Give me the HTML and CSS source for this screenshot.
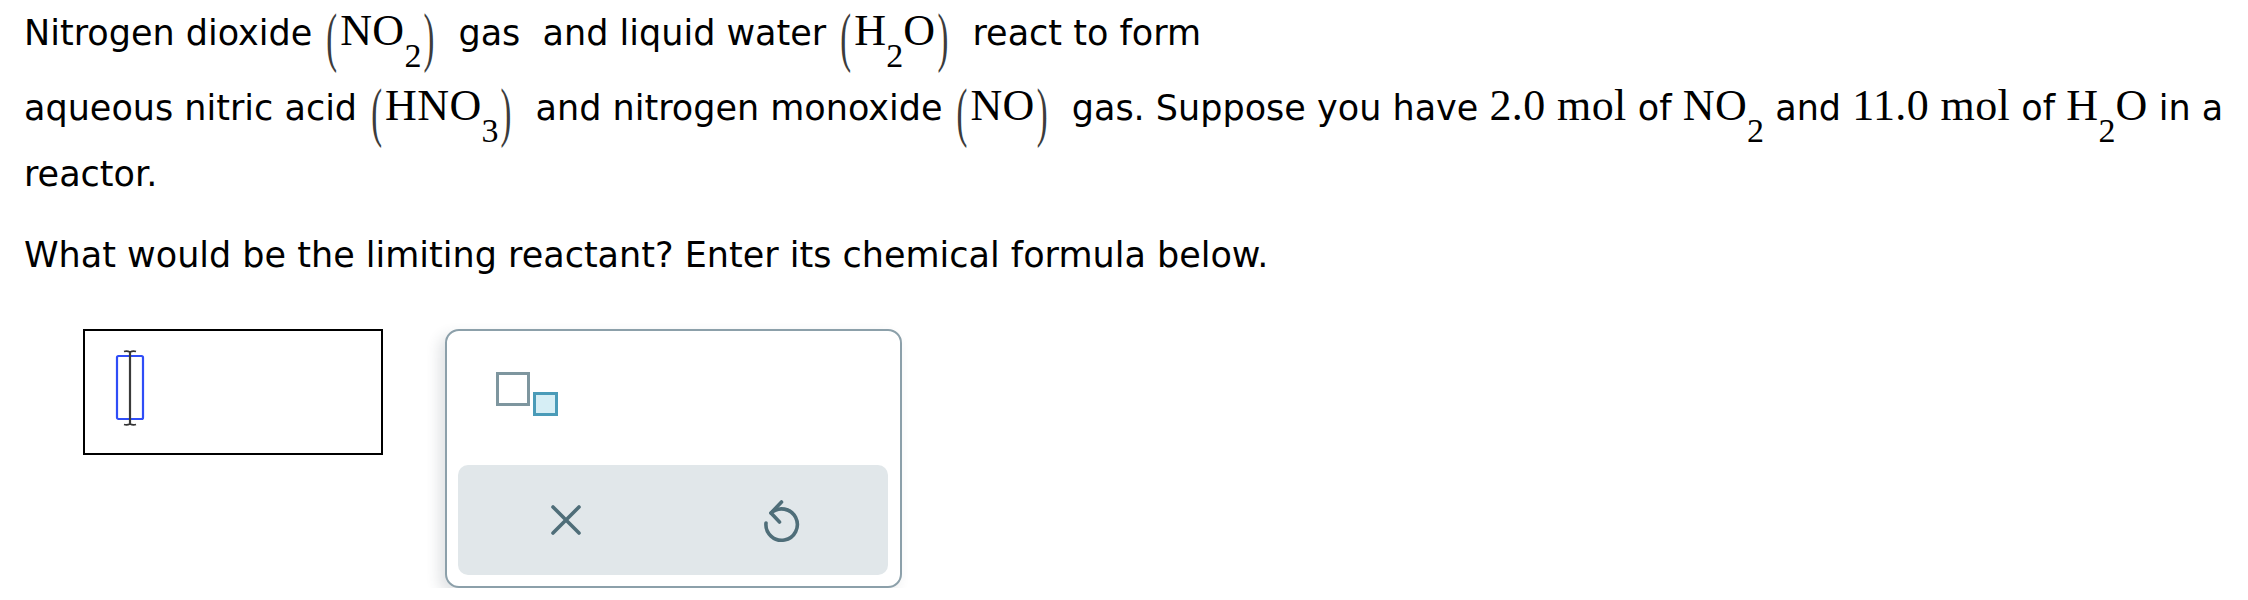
FILE: index.html
```html
<!DOCTYPE html>
<html lang="en">
<head>
<meta charset="utf-8">
<title>Limiting reactant</title>
<link rel="stylesheet" href="styles.css">
</head>
<body>
<div class="question">
  <p class="stmt">
    <span class="line l1">Nitrogen dioxide <span class="paren pl">(</span><span class="m">NO<sub>2</sub></span><span class="paren pr">)</span> gas&nbsp; and liquid water <span class="paren pl">(</span><span class="m">H<sub>2</sub>O</span><span class="paren pr">)</span> react to form</span>
    <span class="line l2">aqueous nitric acid <span class="paren pl">(</span><span class="m">HNO<sub>3</sub></span><span class="paren pr">)</span> and nitrogen monoxide <span class="paren pl">(</span><span class="m">NO</span><span class="paren pr">)</span> gas. Suppose you have <span class="m">2.0 mol</span> of <span class="m">NO<sub>2</sub></span> and <span class="m">11.0 mol</span> of <span class="m">H<sub>2</sub>O</span> in a</span>
    <span class="line l3">reactor.</span>
  </p>
  <p class="ask">What would be the limiting reactant? Enter its chemical formula below.</p>
  <div class="answer">
    <div class="input">
      <svg class="cursor" width="30" height="80" viewBox="0 0 30 80">
        <rect x="2" y="8" width="26" height="63" rx="1.5" fill="#fff" stroke="#2f4df7" stroke-width="2.2"/>
        <path d="M9 3.5 Q12 2.5 15 4 Q18 2.5 21 3.5" fill="none" stroke="#333" stroke-width="1.6"/>
        <path d="M9 76.5 Q12 77.5 15 76 Q18 77.5 21 76.5" fill="none" stroke="#333" stroke-width="1.6"/>
        <path d="M15 4 V76" stroke="#3a3a3a" stroke-width="2.2"/>
      </svg>
    </div>
    <div class="palette">
      <div class="tools">
        <svg width="64" height="46" viewBox="0 0 64 46">
          <rect x="1.5" y="1.5" width="31" height="31" fill="#fff" stroke="#7e969f" stroke-width="3"/>
          <rect x="38.5" y="21.5" width="22" height="21" fill="#d6eef5" stroke="#4a9bb8" stroke-width="3"/>
        </svg>
      </div>
      <div class="actions">
        <button class="act" type="button" aria-label="Clear">
          <svg width="32" height="32" viewBox="0 0 32 32">
            <path d="M3 3 L29 29 M29 3 L3 29" stroke="#4f6e79" stroke-width="3.6" stroke-linecap="round"/>
          </svg>
        </button>
        <button class="act" type="button" aria-label="Undo">
          <svg width="40" height="46" viewBox="0 0 40 46">
            <path d="M10 16 A15.7 15.7 0 1 1 5 26" fill="none" stroke="#4f6e79" stroke-width="3.6" stroke-linecap="round"/>
            <path d="M20.5 5 L10 16 L18.5 25" fill="none" stroke="#4f6e79" stroke-width="3.6" stroke-linecap="round" stroke-linejoin="round"/>
          </svg>
        </button>
      </div>
    </div>
  </div>
</div>
</body>
</html>
```

FILE: styles.css
```css
html, body {
  margin: 0;
  padding: 0;
  background: #fff;
}

body {
  font-family: "DejaVu Sans", Verdana, sans-serif;
  font-size: 35px;
  color: #000;
}

.question {
  padding-left: 24px;
}

.stmt {
  margin: 0;
}

.line {
  display: block;
  white-space: nowrap;
  line-height: 60px;
  height: 60px;
}

.l1 {
  padding-top: 3px;
}

.l2 {
  margin-top: 15px;
}

.l3 {
  margin-top: 6px;
}

.m {
  font-family: "Liberation Serif", "Times New Roman", serif;
  font-size: 44px;
  letter-spacing: 0.4px;
  line-height: 0;
}

.m sub {
  font-size: 34px;
  vertical-align: -22px;
  line-height: 0;
  letter-spacing: 0;
}

.paren {
  display: inline-block;
  font-family: "Liberation Serif", "Times New Roman", serif;
  font-size: 32.5px;
  line-height: 0.7;
  color: #3c3c3c;
  transform: translateY(3px) scaleY(2);
}

.pl {
  margin: 0 3px 0 3px;
}

.pr {
  margin: 0 13px 0 2px;
}

.ask {
  margin: 21px 0 0;
  line-height: 60px;
  white-space: nowrap;
}

.answer {
  display: flex;
  align-items: flex-start;
  margin-top: 44px;
  padding-left: 59px;
}

.input {
  box-sizing: border-box;
  width: 300px;
  height: 126px;
  border: 2px solid #000;
  padding: 17px 0 0 30px;
}

.cursor {
  display: block;
}

.palette {
  box-sizing: border-box;
  width: 457px;
  height: 259px;
  margin-left: 62px;
  border: 2px solid #8ca0aa;
  border-radius: 14px;
  background: #fff;
  box-shadow: -6px 6px 14px rgba(40, 60, 70, 0.14);
  padding: 0 12px 11px 11px;
  display: flex;
  flex-direction: column;
}

.tools {
  box-sizing: border-box;
  height: 134px;
  padding: 41px 0 0 38px;
}

.tools svg {
  display: block;
}

.actions {
  flex: 1;
  display: flex;
  background: #e1e7ea;
  border-radius: 10px;
}

.act {
  flex: 1;
  border: 0;
  padding: 0;
  margin: 0;
  background: transparent;
  display: flex;
  align-items: center;
  justify-content: center;
  cursor: pointer;
}

.act svg {
  display: block;
}
```
